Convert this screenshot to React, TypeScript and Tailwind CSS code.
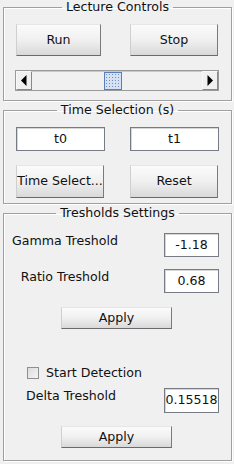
import React from 'react';

const font = { fontFamily: '"DejaVu Sans", Verdana, sans-serif' };

function Panel({ title, className, children }: { title: string; className?: string; children: React.ReactNode }) {
  return (
    <fieldset
      className={`ml-[3px] w-[229px] border border-[#a0a0a0] shadow-[inset_1px_1px_0_#ffffff,1px_1px_0_#ffffff] px-[12px] ${className ?? ''}`}
    >
      <legend className="mx-auto px-[4px] text-[12.6px] leading-[14px] text-[#111]">{title}</legend>
      {children}
    </fieldset>
  );
}

function Btn({ label, className }: { label: string; className: string }) {
  return (
    <button
      className={`flex items-center justify-center bg-gradient-to-b from-[#fbfbfb] via-[#f0f0f0] to-[#d9d9d9] border border-t-[#e6e6e6] border-l-[#cfcfcf] border-r-[#7a7a7a] border-b-[#6a6a6a] text-[12.6px] text-[#111] whitespace-nowrap ${className}`}
    >
      {label}
    </button>
  );
}

function Edit({ value, className }: { value: string; className: string }) {
  return (
    <div
      className={`flex items-center justify-center bg-white border border-[#777b86] shadow-[inset_1px_1px_0_#d6d6d6] text-[12.6px] text-[#111] overflow-hidden ${className}`}
    >
      {value}
    </div>
  );
}

function Arrow({ dir }: { dir: 'left' | 'right' }) {
  return (
    <div className="w-[16px] h-full flex items-center justify-center bg-[#f0f0f0] border border-t-[#f8f8f8] border-l-[#f8f8f8] border-r-[#888] border-b-[#888]">
      <svg width="6" height="11" viewBox="0 0 6 11">
        {dir === 'left' ? <path d="M5.5 0 L0 5.5 L5.5 11 Z" fill="#000" /> : <path d="M0.5 0 L6 5.5 L0.5 11 Z" fill="#000" />}
      </svg>
    </div>
  );
}

export default function App() {
  return (
    <div className="w-[234px] h-[464px] bg-[#f0f0f0] overflow-hidden" style={font}>
      <Panel title="Lecture Controls" className="pb-[9px]">
        <div className="flex justify-between pt-[10px] pr-[1px]">
          <Btn label="Run" className="w-[85px] h-[32px]" />
          <Btn label="Stop" className="w-[88px] h-[32px]" />
        </div>
        <div className="mt-[14px] -ml-[1px] w-[204px] h-[21px] flex border border-[#9a9a9a] bg-[#f0f0f0]">
          <Arrow dir="left" />
          <div className="flex-1 flex border-t border-[#c8c8c8]">
            <div className="w-[72px]" />
            <div className="w-[18px] h-full border border-[#5a7fb5] bg-[#d6e2f3] bg-[radial-gradient(#6d8fc8_0.8px,transparent_0.9px)] bg-[length:3px_3px]" />
          </div>
          <Arrow dir="right" />
        </div>
      </Panel>

      <Panel title="Time Selection (s)" className="mt-[2px] pb-[5px]">
        <div className="flex justify-between pt-[10px]">
          <Edit value="t0" className="w-[89px] h-[24px]" />
          <Edit value="t1" className="w-[89px] h-[24px]" />
        </div>
        <div className="flex justify-between mt-[14px] pr-[1px]">
          <Btn label="Time Select..." className="w-[88px] h-[33px]" />
          <Btn label="Reset" className="w-[88px] h-[33px]" />
        </div>
      </Panel>

      <Panel title="Tresholds Settings" className="mt-[2px] pb-[12px]">
        <div className="flex items-start justify-between pt-[13px]">
          <div className="w-[112px] -ml-[7px] text-center text-[12.6px] leading-[14px] pt-[1px] text-[#111]">Gamma Treshold</div>
          <Edit value="-1.18" className="w-[55px] h-[24px]" />
        </div>
        <div className="flex items-start justify-between mt-[12px]">
          <div className="w-[112px] -ml-[7px] text-center text-[12.6px] leading-[14px] pt-[1px] text-[#111]">Ratio Treshold</div>
          <Edit value="0.68" className="w-[55px] h-[24px]" />
        </div>
        <div className="flex mt-[14px] pl-[45px]">
          <Btn label="Apply" className="w-[111px] h-[22px]" />
        </div>
        <div className="flex items-center mt-[37px] pl-[11px] gap-[7px]">
          <div className="w-[12px] h-[12px] border border-[#8e8f8f] bg-gradient-to-br from-[#dcdcdc] to-[#f4f4f4]" />
          <span className="text-[12.6px] leading-[14px] text-[#111]">Start Detection</span>
        </div>
        <div className="flex items-start justify-between mt-[8px]">
          <div className="w-[112px] -ml-[1px] text-center text-[12.6px] leading-[14px] pt-[1px] text-[#111]">Delta Treshold</div>
          <Edit value="0.15518" className="w-[55px] h-[25px]" />
        </div>
        <div className="flex mt-[13px] pl-[45px]">
          <Btn label="Apply" className="w-[111px] h-[22px]" />
        </div>
      </Panel>
    </div>
  );
}
